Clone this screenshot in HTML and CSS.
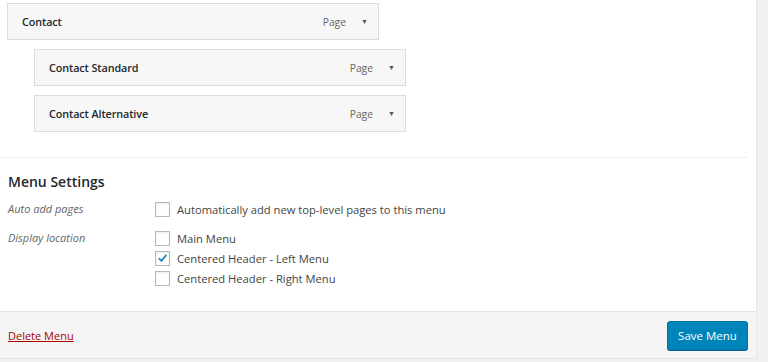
FILE: index.html
```html
<!DOCTYPE html>
<html>
<head>
<meta charset="utf-8">
<link rel="stylesheet" href="styles.css">
</head>
<body>
<div class="page">
  <div class="panel">
    <div class="body">
      <ul class="items">
        <li class="item depth0">
          <span class="title">Contact</span>
          <span class="type">Page</span>
          <span class="arrow">&#9660;</span>
        </li>
        <li class="item depth1">
          <span class="title">Contact Standard</span>
          <span class="type">Page</span>
          <span class="arrow">&#9660;</span>
        </li>
        <li class="item depth1">
          <span class="title">Contact Alternative</span>
          <span class="type">Page</span>
          <span class="arrow">&#9660;</span>
        </li>
      </ul>
      <div class="settings">
        <h3>Menu Settings</h3>
        <div class="row row-auto">
          <div class="label">Auto add pages</div>
          <div class="opts">
            <label class="opt"><span class="cb"></span>Automatically add new top-level pages to this menu</label>
          </div>
        </div>
        <div class="row">
          <div class="label">Display location</div>
          <div class="opts">
            <label class="opt"><span class="cb"></span>Main Menu</label>
            <label class="opt"><span class="cb checked"><svg viewBox="0 0 14 14" width="14" height="14"><path d="M3 7.2 L5.8 10 L11.2 3.6" fill="none" stroke="#1e8cbe" stroke-width="2"/></svg></span>Centered Header - Left Menu</label>
            <label class="opt"><span class="cb"></span>Centered Header - Right Menu</label>
          </div>
        </div>
      </div>
    </div>
    <div class="footer">
      <a class="delete" href="#">Delete Menu</a>
      <button class="save">Save Menu</button>
    </div>
  </div>
  <div class="side"></div>
</div>
</body>
</html>
```
FILE: styles.css
```css
* { box-sizing: border-box; }
html, body { margin: 0; padding: 0; }
body {
  background: #f1f1f1;
  font-family: "Open Sans", "Noto Sans", sans-serif;
  font-size: 11px;
  color: #444;
  width: 768px;
  height: 362px;
  overflow: hidden;
}
.page { display: flex; height: 362px; }
.panel {
  width: 757px;
  background: #fff;
  display: flex;
  flex-direction: column;
  height: 359px;
  border-right: 1px solid #e5e5e5;
  border-bottom: 1px solid #e5e5e5;
}
.side { flex: 1; background: #f1f1f1; }
.body { flex: 1; }
.items { list-style: none; margin: 0; padding: 3px 0 0 0; }
.item {
  display: flex;
  align-items: center;
  height: 37px;
  width: 372px;
  border: 1px solid #dcdcdc;
  background: #f7f7f7;
  margin-bottom: 9px;
  padding: 0 0 0 14px;
}
.depth0 { margin-left: 7px; }
.depth1 { margin-left: 34px; }
.title { flex: 1; font-weight: 600; color: #23282d; font-size: 10.8px; letter-spacing: -0.1px; }
.type { color: #666; font-size: 10.3px; margin-right: 15px; }
.arrow { color: #555; font-size: 7px; width: 17px; }
.settings {
  margin: 25px 8px 0 0;
  border-top: 1px solid #eee;
  padding: 14px 0 0 8px;
}
h3 { margin: 0 0 8px 0; font-size: 14px; font-weight: 600; color: #23282d; }
.row { display: flex; margin-bottom: 9px; }
.label { width: 147px; font-style: italic; color: #666; font-size: 11px; line-height: 20px; }
.opts { display: flex; flex-direction: column; }
.opt { display: flex; align-items: center; height: 20px; font-size: 11.2px; color: #444; }
.cb {
  width: 15px; height: 15px;
  border: 1px solid #b4b9be;
  background: #fff;
  margin-right: 7px;
  display: inline-flex;
  align-items: center;
  justify-content: center;
  box-shadow: inset 0 1px 2px rgba(0,0,0,0.08);
}
.footer {
  height: 47px;
  background: #f5f5f5;
  border-top: 1px solid #e2e2e2;
  display: flex;
  align-items: center;
  justify-content: space-between;
  padding: 0 8px 0 8px;
}
.delete { color: #a00; font-size: 11px; text-decoration: underline; }
.save {
  font-family: inherit;
  font-size: 11.5px;
  color: #fff;
  background: #0085ba;
  border: 1px solid #0073aa;
  border-radius: 3px;
  height: 29px;
  width: 81px;
  box-shadow: 0 1px 0 #006799;
}
```
